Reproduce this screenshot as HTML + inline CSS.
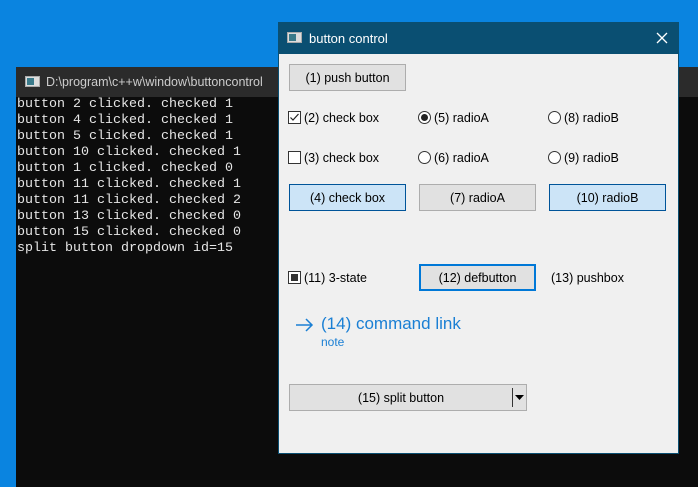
<!DOCTYPE html>
<html><head><style>
*{margin:0;padding:0;box-sizing:border-box}
body{width:698px;height:480px;position:relative;overflow:hidden;background:#0a84e0;font-family:"Liberation Sans",sans-serif;font-size:12.5px;color:#000}
.abs{position:absolute}
#con{left:16px;top:67px;width:700px;height:420px;background:#0c0c0c}
#ctitle{left:0;top:0;width:100%;height:30px;background:#2b2b2b;color:#ccc;font-size:12.5px;line-height:30px;padding-left:30px}
#ctext{left:1px;top:30px;color:#e6e6e6;font-family:"Liberation Mono",monospace;font-size:13.33px;line-height:16px;white-space:pre}
#dlg{left:278px;top:22px;width:401px;height:432px;background:#f0f0f0;border:1px solid #0a4f72}
#dtitle{left:0;top:0;width:100%;height:31px;background:#0a4f72;color:#fff;font-size:13px;line-height:31px;padding-left:30px}
.btn{position:absolute;background:#e1e1e1;border:1px solid #adadad;text-align:center;line-height:26px;height:27px;width:117px}
.blue{background:#cce4f7;border-color:#005499}
.lbl{position:absolute;line-height:14px;white-space:nowrap}
.cb{position:absolute;width:13px;height:13px;border:1px solid #333;background:#fff}
.rb{position:absolute;width:13px;height:13px;border:1px solid #333;border-radius:50%;background:#fff}
.icon{position:absolute;width:15px;height:11px;background:#ddd;border:1px solid #aaa}
.icon:after{content:"";position:absolute;left:1px;top:1px;width:7px;height:7px;background:#3a7a8a}
</style></head><body>
<div id="con" class="abs">
<div id="ctitle" class="abs">D:\program\c++w\window\buttoncontrol</div>
<div class="icon" style="left:9px;top:9px"></div>
<div id="ctext" class="abs">button 2 clicked. checked 1
button 4 clicked. checked 1
button 5 clicked. checked 1
button 10 clicked. checked 1
button 1 clicked. checked 0
button 11 clicked. checked 1
button 11 clicked. checked 2
button 13 clicked. checked 0
button 15 clicked. checked 0
split button dropdown id=15</div>
</div>
<div id="dlg" class="abs">
<div id="dtitle" class="abs">button control</div>
<div class="icon" style="left:8px;top:9px"></div>
<svg class="abs" style="left:377px;top:9px" width="12" height="12"><path d="M1 1L11 11M11 1L1 11" stroke="#fff" stroke-width="1.3"/></svg>
</div>
<div class="btn" style="left:289px;top:64px">(1) push button</div>

<div class="cb" style="left:288px;top:111px"></div>
<svg class="abs" style="left:288px;top:111px" width="13" height="13"><path d="M2.5 6.5L5 9L10.5 3" stroke="#222" fill="none" stroke-width="1.2"/></svg>
<div class="lbl" style="left:304px;top:111px">(2) check box</div>
<div class="rb" style="left:418px;top:111px"></div>
<div class="abs" style="left:421px;top:114px;width:7px;height:7px;border-radius:50%;background:#222"></div>
<div class="lbl" style="left:434px;top:111px">(5) radioA</div>
<div class="rb" style="left:548px;top:111px"></div>
<div class="lbl" style="left:564px;top:111px">(8) radioB</div>

<div class="cb" style="left:288px;top:151px"></div>
<div class="lbl" style="left:304px;top:151px">(3) check box</div>
<div class="rb" style="left:418px;top:151px"></div>
<div class="lbl" style="left:434px;top:151px">(6) radioA</div>
<div class="rb" style="left:548px;top:151px"></div>
<div class="lbl" style="left:564px;top:151px">(9) radioB</div>

<div class="btn blue" style="left:289px;top:184px">(4) check box</div>
<div class="btn" style="left:419px;top:184px">(7) radioA</div>
<div class="btn blue" style="left:549px;top:184px">(10) radioB</div>

<div class="cb" style="left:288px;top:271px"></div>
<div class="abs" style="left:291px;top:274px;width:7px;height:7px;background:#333"></div>
<div class="lbl" style="left:304px;top:271px">(11) 3-state</div>
<div class="btn" style="left:419px;top:264px;border:2px solid #0078d7;line-height:24px">(12) defbutton</div>
<div class="lbl" style="left:551px;top:271px">(13) pushbox</div>

<svg class="abs" style="left:295px;top:318px" width="20" height="14"><path d="M1 7H17M11 1L17 7L11 13" stroke="#1a7fd4" fill="none" stroke-width="1.5"/></svg>
<div class="lbl" style="left:321px;top:314px;font-size:17px;line-height:20px;color:#1a7fd4">(14) command link</div>
<div class="lbl" style="left:321px;top:335px;font-size:12px;color:#1a7fd4">note</div>

<div class="btn" style="left:289px;top:384px;width:238px;padding-right:14px">(15) split button</div>
<div class="abs" style="left:512px;top:388px;width:1px;height:19px;background:#333"></div>
<svg class="abs" style="left:515px;top:395px" width="9" height="5"><path d="M0 0H9L4.5 5Z" fill="#000"/></svg>
</body></html>
